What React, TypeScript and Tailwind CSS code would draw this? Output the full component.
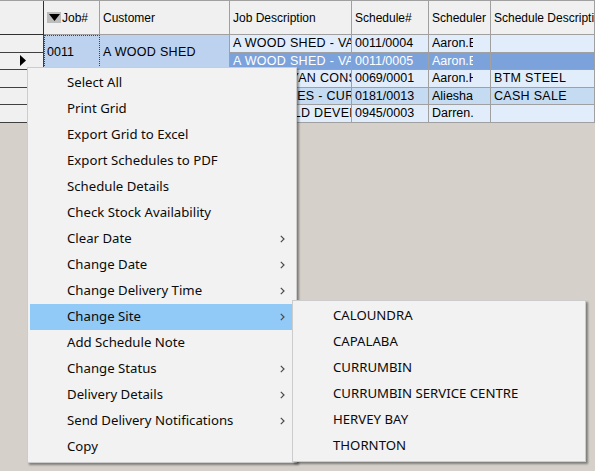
import React from 'react'

const grid = "font-['Liberation_Sans',Arial,sans-serif] text-[12px] text-black"
const menuFont = "font-['Noto_Sans','Open_Sans',sans-serif] text-[13.2px] text-[#0a0a0a]"

type Row = {
  desc: string
  sched: string
  who: string
  note: string
  bg: string
  selected?: boolean
}

const rows: Row[] = [
  { desc: 'A WOOD SHED - VALLEY', sched: '0011/0004', who: 'Aaron.Blake', note: '', bg: 'bg-[#e2edfb]' },
  { desc: 'A WOOD SHED - VALLEY', sched: '0011/0005', who: 'Aaron.Blake', note: '', bg: 'bg-[#7ba2db]', selected: true },
  { desc: 'DEAN BRYAN CONSTRUCTIONS', sched: '0069/0001', who: 'Aaron.Hill', note: 'BTM STEEL', bg: 'bg-[#e2edfb]' },
  { desc: 'CASH SALES - CURRUMBIN', sched: '0181/0013', who: 'Aliesha', note: 'CASH SALE', bg: 'bg-[#c4dbf2]' },
  { desc: 'KINGSFIELD DEVELOPMENTS', sched: '0945/0003', who: 'Darren.Walsh', note: '', bg: 'bg-[#e2edfb]' },
]

const menuItems: { label: string; sub?: boolean }[] = [
  { label: 'Select All' },
  { label: 'Print Grid' },
  { label: 'Export Grid to Excel' },
  { label: 'Export Schedules to PDF' },
  { label: 'Schedule Details' },
  { label: 'Check Stock Availability' },
  { label: 'Clear Date', sub: true },
  { label: 'Change Date', sub: true },
  { label: 'Change Delivery Time', sub: true },
  { label: 'Change Site', sub: true },
  { label: 'Add Schedule Note' },
  { label: 'Change Status', sub: true },
  { label: 'Delivery Details', sub: true },
  { label: 'Send Delivery Notifications', sub: true },
  { label: 'Copy' },
]

const sites = ['CALOUNDRA', 'CAPALABA', 'CURRUMBIN', 'CURRUMBIN SERVICE CENTRE', 'HERVEY BAY', 'THORNTON']

function Chevron() {
  return (
    <svg width="5" height="8" viewBox="0 0 5 8" className="shrink-0">
      <path d="M0.8 0.8 L4 4 L0.8 7.2" fill="none" stroke="#4a4a4a" strokeWidth="1.2" />
    </svg>
  )
}

function HeadCell({ children, className = '' }: { children?: React.ReactNode; className?: string }) {
  return (
    <div className={`flex items-center px-[3px] bg-[#f0f0f0] border-r border-b border-[#a0a0a0] overflow-hidden whitespace-nowrap ${className}`}>
      {children}
    </div>
  )
}

function Cell({ children, className = '' }: { children?: React.ReactNode; className?: string }) {
  return (
    <div className={`flex items-center pl-[3px] border-r border-b border-[#a0a0a0] overflow-hidden whitespace-nowrap ${className}`}>
      {children}
    </div>
  )
}

export default function App() {
  return (
    <div className="relative w-[595px] h-[471px] bg-[#d5d1ca] overflow-hidden">
      {/* Grid */}
      <div
        className={`grid grid-cols-[44px_56px_130px_122px_77px_62px_104px] grid-rows-[34px_repeat(5,17.6px)] border-t border-[#a0a0a0] bg-white ${grid}`}
      >
        <div className="bg-[#f0f0f0] border-r border-b border-r-[#303030] border-b-[#303030]" />
        <HeadCell className="pl-[3px]">
          <span className="flex items-center justify-center w-[14px] h-[11px] bg-[#bcbcbc] mr-[1px]">
            <svg width="11" height="7" viewBox="0 0 11 7">
              <path d="M0 0 H11 L5.5 7 Z" fill="#000" />
            </svg>
          </span>
          Job#
        </HeadCell>
        <HeadCell>Customer</HeadCell>
        <HeadCell>Job Description</HeadCell>
        <HeadCell>Schedule#</HeadCell>
        <HeadCell>Scheduler</HeadCell>
        <HeadCell>Schedule Description</HeadCell>

        {rows.map((r, i) => (
          <React.Fragment key={i}>
            <div
              style={{ gridRow: i + 2, gridColumn: 1 }}
              className="flex items-center justify-end pr-[17px] bg-[#f0f0f0] border-r border-b border-[#404040]"
            >
              {r.selected && (
                <svg width="6" height="11" viewBox="0 0 6 11">
                  <path d="M0 0 L6 5.5 L0 11 Z" fill="#000" />
                </svg>
              )}
            </div>
            {i === 0 && (
              <>
                <div className="row-span-2 col-start-2 row-start-2 flex items-center pl-[2px] bg-[#bcd2ef] border border-dotted border-[#444] text-[12.5px]">
                  0011
                </div>
                <div className="row-span-2 col-start-3 row-start-2 flex items-center pl-[3px] bg-[#bcd2ef] border-r border-b border-[#a0a0a0] text-[12.5px] tracking-[0.3px]">
                  A WOOD SHED
                </div>
              </>
            )}
            {i > 1 && (
              <>
                <Cell className={r.bg} />
                <Cell className={r.bg} />
              </>
            )}
            <Cell className={`${r.bg} ${r.selected ? 'text-white' : ''} text-[12.5px] tracking-[0.3px]`}>{r.desc}</Cell>
            <Cell className={`${r.bg} ${r.selected ? 'text-white' : ''} text-[12.5px]`}>{r.sched}</Cell>
            <Cell className={`${r.bg} ${r.selected ? 'text-white' : ''} text-[12.5px] pr-[17px]`}>
              <span className="block w-full overflow-hidden">{r.who}</span>
            </Cell>
            <Cell className={`${r.bg} ${r.selected ? 'text-white' : ''} text-[12.5px] tracking-[0.3px]`}>{r.note}</Cell>
          </React.Fragment>
        ))}
      </div>

      {/* Context menu */}
      <div
        className={`absolute left-[27px] top-[67px] w-[270px] p-[2px] bg-[#f2f2f2] border border-[#cccccc] shadow-[2px_2px_2px_rgba(0,0,0,0.4)] ${menuFont}`}
      >
        {menuItems.map((m) => (
          <div
            key={m.label}
            className={`flex items-center justify-between h-[26px] pl-[37px] pr-[9px] ${
              m.label === 'Change Site' ? 'bg-[#91c9f7]' : ''
            }`}
          >
            <span>{m.label}</span>
            {m.sub && <Chevron />}
          </div>
        ))}
      </div>

      {/* Site submenu */}
      <div
        className={`absolute left-[292px] top-[300px] w-[294px] p-[2px] bg-[#f2f2f2] border border-[#cccccc] shadow-[2px_2px_2px_rgba(0,0,0,0.4)] ${menuFont}`}
      >
        {sites.map((s) => (
          <div key={s} className="flex items-center h-[26px] pl-[38px]">
            {s}
          </div>
        ))}
      </div>
    </div>
  )
}
